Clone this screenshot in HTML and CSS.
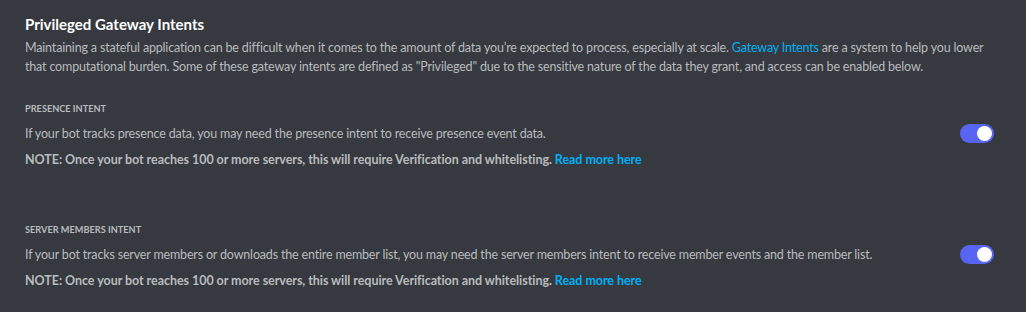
FILE: index.html
```html
<!DOCTYPE html>
<html lang="en">
<head>
<meta charset="utf-8">
<title>Privileged Gateway Intents</title>
<link rel="stylesheet" href="styles.css">
</head>
<body>
<main class="page">
  <h2 class="title">Privileged Gateway Intents</h2>
  <p class="intro">Maintaining a stateful application can be difficult when it comes to the amount of data you’re expected to process, especially at scale. <a class="link" href="#">Gateway Intents</a> are a system to help you lower that computational burden. Some of these gateway intents are defined as "Privileged" due to the sensitive nature of the data they grant, and access can be enabled below.</p>

  <section class="intent">
    <h3 class="intent-label">PRESENCE INTENT</h3>
    <div class="intent-row">
      <p class="intent-desc">If your bot tracks presence data, you may need the presence intent to receive presence event data.</p>
      <span class="toggle"><span class="knob"></span></span>
    </div>
    <p class="note">NOTE: Once your bot reaches 100 or more servers, this will require Verification and whitelisting. <a class="link" href="#">Read more here</a></p>
  </section>

  <section class="intent">
    <h3 class="intent-label">SERVER MEMBERS INTENT</h3>
    <div class="intent-row">
      <p class="intent-desc">If your bot tracks server members or downloads the entire member list, you may need the server members intent to receive member events and the member list.</p>
      <span class="toggle"><span class="knob"></span></span>
    </div>
    <p class="note">NOTE: Once your bot reaches 100 or more servers, this will require Verification and whitelisting. <a class="link" href="#">Read more here</a></p>
  </section>
</main>
</body>
</html>
```
FILE: styles.css
```css
* { box-sizing: border-box; }
html, body {
  margin: 0;
  padding: 0;
  background: #36393f;
}
body {
  font-family: Lato, "Liberation Sans", sans-serif;
  color: #b9bbbe;
}
.page {
  padding: 14px 32px 0 25px;
}
.title {
  margin: 0;
  font-size: 15px;
  line-height: 20px;
  font-weight: 700;
  color: #ffffff;
}
.intro {
  margin: 4px 0 0;
  font-size: 12.5px;
  letter-spacing: -0.17px;
  line-height: 19px;
}
.link {
  color: #00b0f4;
  text-decoration: none;
}
.intent:first-of-type {
  margin-top: 26px;
}
.intent + .intent {
  margin-top: 54px;
}
.intent-label {
  margin: 0;
  font-size: 9.2px;
  line-height: 14px;
  font-weight: 700;
  text-transform: uppercase;
}
.intent-row {
  display: flex;
  align-items: center;
  justify-content: space-between;
  margin-top: 8px;
}
.intent-desc {
  margin: 0;
  font-size: 12.5px;
  letter-spacing: -0.17px;
  line-height: 19px;
}
.toggle {
  flex: none;
  width: 34px;
  height: 19px;
  border-radius: 10px;
  background: #5865f2;
  display: flex;
  align-items: center;
  justify-content: flex-end;
  padding: 0 2px;
}
.knob {
  width: 15px;
  height: 15px;
  border-radius: 50%;
  background: #ffffff;
}
.note {
  margin: 7px 0 0;
  font-size: 12.5px;
  letter-spacing: -0.05px;
  line-height: 19px;
  font-weight: 700;
}
```
